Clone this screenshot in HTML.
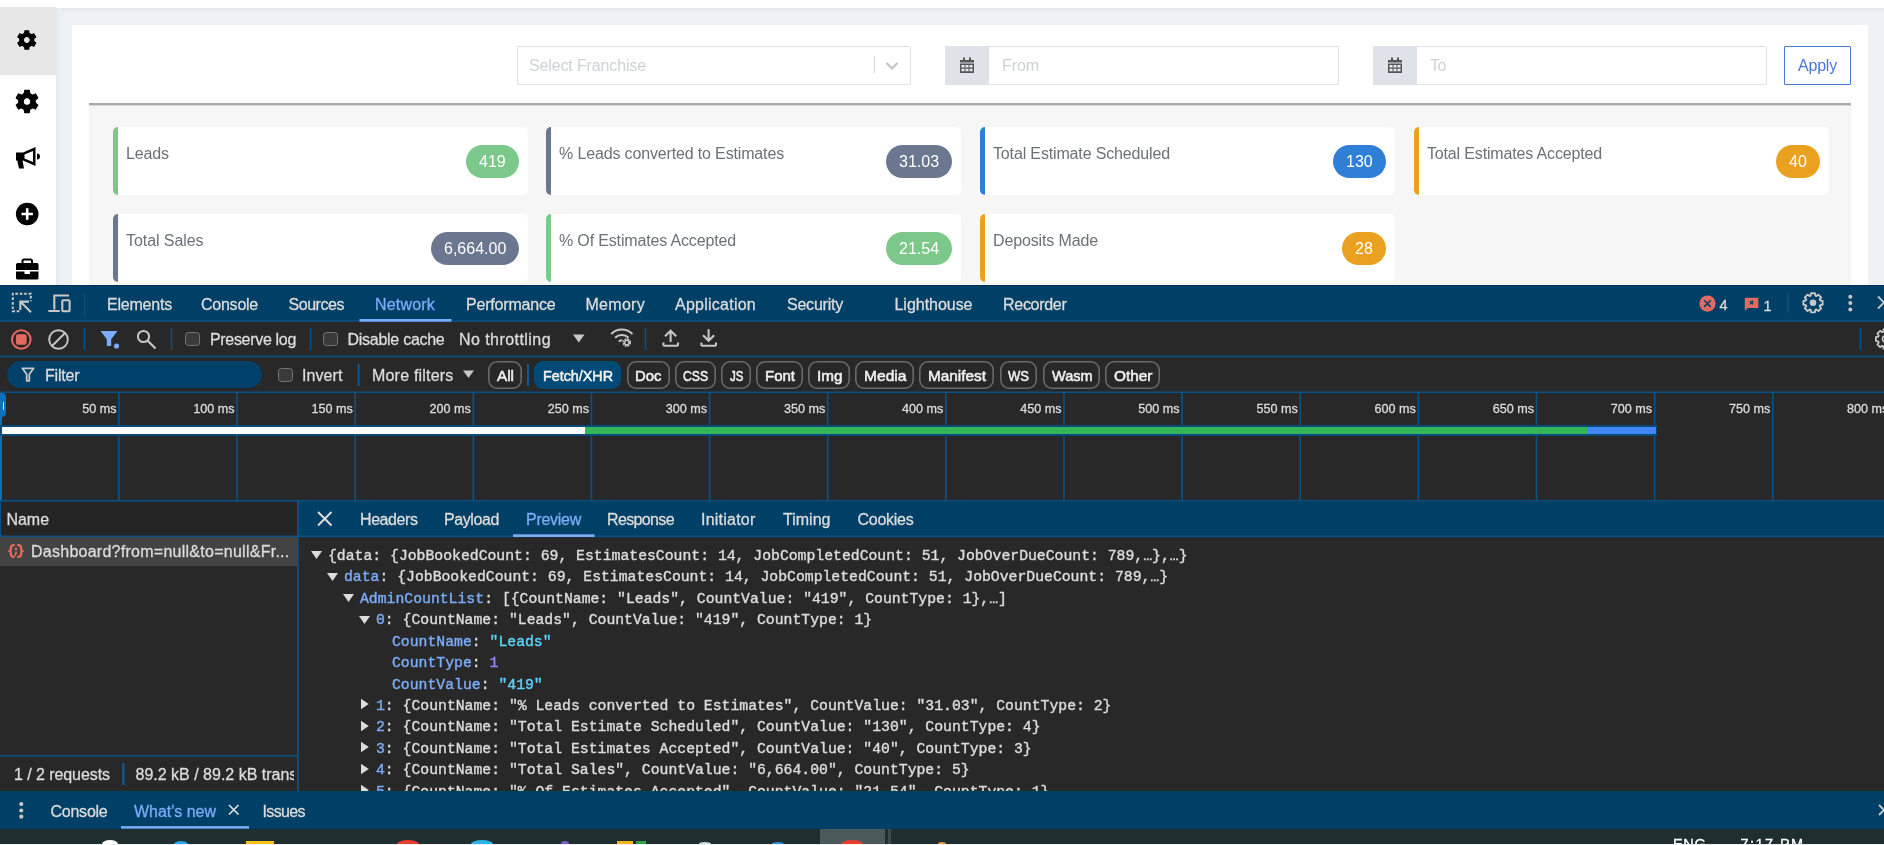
<!DOCTYPE html><html><head><meta charset="utf-8"><title>Dashboard</title><style>
html,body{margin:0;padding:0;background:#fff;}body{width:1884px;height:845px;overflow:hidden;position:relative;font-family:"Liberation Sans", sans-serif;}
.a{position:absolute;box-sizing:border-box;}.t{position:absolute;white-space:pre;line-height:24px;height:24px;}
svg{position:absolute;overflow:visible;}.m{font-family:"Liberation Mono",monospace;}.z{z-index:3;}.d{-webkit-text-stroke:0.3px currentColor;}.m.d{-webkit-text-stroke:0.4px currentColor;}
#w{position:absolute;left:0;top:0;width:1884px;height:845px;overflow:hidden;will-change:transform;}
</style></head><body><div id="w">
<div class="a" style="left:56px;top:8px;width:1828px;height:277px;background:#eef1f5;"></div>
<div class="a" style="left:56px;top:8px;width:1828px;height:5px;background:linear-gradient(#e2e6ea,#eef1f5);"></div>
<div class="a" style="left:56px;top:8px;width:5px;height:277px;background:linear-gradient(90deg,#e4e8ec,#eef1f5);"></div>
<div class="a" style="left:0px;top:7px;width:56px;height:68px;background:#e6e6e6;"></div>
<div class="a" style="left:72px;top:25px;width:1796px;height:260px;background:#ffffff;"></div>
<div class="a" style="left:89px;top:105px;width:1762px;height:180px;background:#f6f6f6;"></div>
<div class="a" style="left:89px;top:103px;width:1762px;height:2px;background:#a9a9a9;"></div>
<div class="a" style="left:89px;top:105px;width:1762px;height:1px;background:#d8d8d8;"></div>
<div class="a" style="left:517px;top:46px;width:394px;height:39px;background:#fff;border:1px solid #dfe3e8;border-radius:1px;"></div>
<div class="a" style="left:874px;top:56px;width:1px;height:17px;background:#d4d4d4;"></div>
<svg style="left:885px;top:61px" width="14" height="10" viewBox="0 0 14 10"><path d="M1.5 2 L7 7.5 L12.5 2" fill="none" stroke="#c2c2c2" stroke-width="2"/></svg>
<div class="a" style="left:945px;top:46px;width:394px;height:39px;background:#fff;border:1px solid #dfe3e8;border-radius:1px;"></div>
<div class="a" style="left:945px;top:46px;width:44px;height:39px;background:#dfe3e9;border-radius:1px 0 0 1px;"></div>
<svg style="left:960px;top:57px" width="14" height="16" viewBox="0 0 14 16"><path d="M0 3 h14 v2.5 h-14z M3 0.5 h2 v3 h-2z M9 0.5 h2 v3 h-2z" fill="#555"/><path d="M0 6.5 h14 v9.5 h-14z" fill="#555"/><path d="M1.5 8 h3 v2.5 h-3z M5.5 8 h3 v2.5 h-3z M9.5 8 h3 v2.5 h-3z M1.5 11.7 h3 v2.5 h-3z M5.5 11.7 h3 v2.5 h-3z M9.5 11.7 h3 v2.5 h-3z" fill="#e6e9ee"/></svg>
<div class="a" style="left:1373px;top:46px;width:394px;height:39px;background:#fff;border:1px solid #dfe3e8;border-radius:1px;"></div>
<div class="a" style="left:1373px;top:46px;width:44px;height:39px;background:#dfe3e9;border-radius:1px 0 0 1px;"></div>
<svg style="left:1388px;top:57px" width="14" height="16" viewBox="0 0 14 16"><path d="M0 3 h14 v2.5 h-14z M3 0.5 h2 v3 h-2z M9 0.5 h2 v3 h-2z" fill="#555"/><path d="M0 6.5 h14 v9.5 h-14z" fill="#555"/><path d="M1.5 8 h3 v2.5 h-3z M5.5 8 h3 v2.5 h-3z M9.5 8 h3 v2.5 h-3z M1.5 11.7 h3 v2.5 h-3z M5.5 11.7 h3 v2.5 h-3z M9.5 11.7 h3 v2.5 h-3z" fill="#e6e9ee"/></svg>
<div class="a" style="left:1784px;top:46px;width:67px;height:39px;background:#fff;border:1px solid #4a78d8;border-radius:1px;"></div>
<div class="a" style="left:113px;top:127px;width:415px;height:68px;background:#fff;border-left:5px solid #7bc88a;border-radius:5px;"></div>
<div class="a" style="left:466px;top:145px;width:53px;height:33px;background:#7bc88a;border-radius:17px;"></div>
<div class="a" style="left:546px;top:127px;width:415px;height:68px;background:#fff;border-left:5px solid #6a778f;border-radius:5px;"></div>
<div class="a" style="left:886px;top:145px;width:66px;height:33px;background:#6a778f;border-radius:17px;"></div>
<div class="a" style="left:980px;top:127px;width:415px;height:68px;background:#fff;border-left:5px solid #2f7fd6;border-radius:5px;"></div>
<div class="a" style="left:1333px;top:145px;width:53px;height:33px;background:#2f7fd6;border-radius:17px;"></div>
<div class="a" style="left:1414px;top:127px;width:415px;height:68px;background:#fff;border-left:5px solid #e9a11f;border-radius:5px;"></div>
<div class="a" style="left:1776px;top:145px;width:44px;height:33px;background:#e9a11f;border-radius:17px;"></div>
<div class="a" style="left:113px;top:214px;width:415px;height:68px;background:#fff;border-left:5px solid #6a778f;border-radius:5px;"></div>
<div class="a" style="left:431px;top:232px;width:88px;height:33px;background:#6a778f;border-radius:17px;"></div>
<div class="a" style="left:546px;top:214px;width:415px;height:68px;background:#fff;border-left:5px solid #7bc88a;border-radius:5px;"></div>
<div class="a" style="left:886px;top:232px;width:66px;height:33px;background:#7bc88a;border-radius:17px;"></div>
<div class="a" style="left:980px;top:214px;width:415px;height:68px;background:#fff;border-left:5px solid #e9a11f;border-radius:5px;"></div>
<div class="a" style="left:1342px;top:232px;width:44px;height:33px;background:#e9a11f;border-radius:17px;"></div>
<svg style="left:0;top:0" width="56" height="285"><path d="M24.57 33.26 L24.93 30.79 L28.67 30.79 L29.03 33.26 L31.52 34.70 L33.84 33.78 L35.71 37.01 L33.75 38.56 L33.75 41.44 L35.71 42.99 L33.84 46.22 L31.52 45.30 L29.03 46.74 L28.67 49.21 L24.93 49.21 L24.57 46.74 L22.08 45.30 L19.76 46.22 L17.89 42.99 L19.85 41.44 L19.85 38.56 L17.89 37.01 L19.76 33.78 L22.08 34.70Z M23.30 40.00 a3.5 3.5 0 1 0 7.0 0 a3.5 3.5 0 1 0 -7.0 0Z" fill="#000" fill-rule="evenodd" stroke="#000" stroke-width="1.2" stroke-linejoin="round"/><path d="M24.39 93.62 L24.77 90.52 L29.23 90.52 L29.61 93.62 L32.52 95.30 L35.39 94.08 L37.62 97.94 L35.13 99.82 L35.13 103.18 L37.62 105.06 L35.39 108.92 L32.52 107.70 L29.61 109.38 L29.23 112.48 L24.77 112.48 L24.39 109.38 L21.48 107.70 L18.61 108.92 L16.38 105.06 L18.87 103.18 L18.87 99.82 L16.38 97.94 L18.61 94.08 L21.48 95.30Z M23.10 101.50 a3.9 3.9 0 1 0 7.8 0 a3.9 3.9 0 1 0 -7.8 0Z" fill="#000" fill-rule="evenodd" stroke="#000" stroke-width="1.4" stroke-linejoin="round"/><path d="M16 152.5 h7 l12.5 -5.5 v19 l-12.5 -5.5 h-0.5 l1.5 8 h-5 l-1.8 -8 h-1.2z M37 153.5 a3 3 0 0 1 0 6z" fill="#000"/><path d="M24.5 154.5 l8.5 -3.5 v11 l-8.5 -3.5z" fill="#fff"/><circle cx="27.2" cy="214" r="11.3" fill="#000"/><path d="M21.5 214 h11.4 M27.2 208.3 v11.4" stroke="#fff" stroke-width="2.6"/><path d="M16 264.5 a1.5 1.5 0 0 1 1.5 -1.5 h19.5 a1.5 1.5 0 0 1 1.5 1.5 v5.5 h-22.5z M16 271.5 h8.5 v2.5 h5.5 v-2.5 h8.5 v6.5 a1.5 1.5 0 0 1 -1.5 1.5 h-19.5 a1.5 1.5 0 0 1 -1.5 -1.5z" fill="#000"/><path d="M22.5 263 v-2 a1.5 1.5 0 0 1 1.5 -1.5 h6.5 a1.5 1.5 0 0 1 1.5 1.5 v2" fill="none" stroke="#000" stroke-width="2"/></svg>
<div class="a" style="left:0px;top:285px;width:1884px;height:36px;background:#003f66;"></div>
<div class="a" style="left:0px;top:285px;width:1884px;height:1px;background:#00305f;"></div>
<div class="a" style="left:0px;top:321px;width:1884px;height:471px;background:#282828;"></div>
<svg style="left:0px;top:320px;" width="1886" height="4"><rect x="0.00" y="0.20" width="1884" height="1.6" fill="#0b5083"/></svg>
<svg style="left:0px;top:355px;" width="1886" height="4"><rect x="0.00" y="0.60" width="1884" height="1.6" fill="#0b5083"/></svg>
<svg style="left:0px;top:391px;" width="1886" height="4"><rect x="0.00" y="0.50" width="1884" height="1.6" fill="#0b5083"/></svg>
<svg style="left:359px;top:319px;" width="94" height="5"><rect x="0.50" y="0.00" width="92" height="2.7" fill="#7cacf8"/></svg>
<div class="a" style="left:84px;top:293px;width:1px;height:24px;background:#0f507f;"></div>
<svg style="left:0;top:285px" width="90" height="36"><path d="M12.800 15 v-6.300 h18 v7.500 M12.800 17 v9.300 h7.500" fill="none" stroke="#c7c7c7" stroke-width="2" stroke-dasharray="2.700 1.700"/><path d="M21 17.300 L31 27.300 M20.300 25 v-8.400 h8.700" fill="none" stroke="#c7c7c7" stroke-width="2.100"/><path d="M54.300 24.500 v-14 h14.700 M48.400 26 h11.300" fill="none" stroke="#c7c7c7" stroke-width="2.100"/><rect x="62.300" y="15.300" width="7.300" height="11" rx="1" fill="none" stroke="#c7c7c7" stroke-width="2.100"/></svg>
<svg style="left:1690px;top:285px" width="194" height="36"><circle cx="17.5" cy="18.6" r="8.1" fill="#e46962"/><path d="M14.2 15.3 l6.600 6.600 M20.800 15.300 l-6.600 6.600" stroke="#003f66" stroke-width="1.500"/><path d="M54.800 12.700 h13.500 v10.300 h-10.500 l-3 2.800z" fill="#e46962"/><path d="M60 16 l3.200 3.200 M63.200 16 l-3.200 3.200" stroke="#003f66" stroke-width="1.300"/><path d="M98 7.500 v20" stroke="#0d5288" stroke-width="1.500"/><g transform="translate(123,17.800)"><path d="M-2.36 -7.12 L-1.95 -9.60 L1.95 -9.60 L2.36 -7.12 L3.37 -6.70 L5.41 -8.17 L8.17 -5.41 L6.70 -3.37 L7.12 -2.36 L9.60 -1.95 L9.60 1.95 L7.12 2.36 L6.70 3.37 L8.17 5.41 L5.41 8.17 L3.37 6.70 L2.36 7.12 L1.95 9.60 L-1.95 9.60 L-2.36 7.12 L-3.37 6.70 L-5.41 8.17 L-8.17 5.41 L-6.70 3.37 L-7.12 2.36 L-9.60 1.95 L-9.60 -1.95 L-7.12 -2.36 L-6.70 -3.37 L-8.17 -5.41 L-5.41 -8.17 L-3.37 -6.70Z M-0.01 0.00 a0.01 0.01 0 1 0 0.02 0 a0.01 0.01 0 1 0 -0.02 0Z" fill="none" stroke="#c7c7c7" stroke-width="1.900" stroke-linejoin="round"/><circle cx="0" cy="0" r="3.300" fill="#c7c7c7"/></g><circle cx="160.300" cy="11.700" r="2" fill="#c7c7c7"/><circle cx="160.300" cy="18" r="2" fill="#c7c7c7"/><circle cx="160.300" cy="24.500" r="2" fill="#c7c7c7"/><path d="M188 11.500 l12 12 M200 11.500 l-12 12" stroke="#c7c7c7" stroke-width="1.900"/></svg>
<svg style="left:0;top:321px" width="1884" height="36"><circle cx="21.3" cy="18.500" r="9.3" fill="none" stroke="#e46962" stroke-width="2"/><rect x="16" y="13.2" width="10.600" height="10.600" rx="2" fill="#e46962"/><circle cx="58.5" cy="18.500" r="9.300" fill="none" stroke="#c7c7c7" stroke-width="1.9"/><path d="M52 25 L65 12" stroke="#c7c7c7" stroke-width="1.9"/><path d="M84.500 7 v22 M171.500 7 v22 M310.500 7 v22 M645.500 7 v22 M1860.500 7 v22" stroke="#0b5083" stroke-width="1.6"/><path d="M100.500 10 h17 l-6.300 8.300 v6.700 h-4.400 v-6.700z" fill="#7cacf8"/><circle cx="116.500" cy="25" r="2.600" fill="#7cacf8"/><circle cx="143.500" cy="15.500" r="5.600" fill="none" stroke="#c7c7c7" stroke-width="2"/><path d="M147.500 19.500 L155.500 27.500" stroke="#c7c7c7" stroke-width="2.2"/><path d="M611.200 12.900 a15 15 0 0 1 21.200 0 M615.100 16.800 a9.500 9.500 0 0 1 13.400 0 M618.800 20.500 a4.200 4.200 0 0 1 3.500 -1.200" fill="none" stroke="#c7c7c7" stroke-width="2.100"/><circle cx="626.800" cy="21.600" r="3.100" fill="none" stroke="#c7c7c7" stroke-width="2.400" stroke-dasharray="1.700 0.740"/><circle cx="626.800" cy="21.600" r="2.200" fill="none" stroke="#c7c7c7" stroke-width="1.300"/><path d="M670.600 21 v-10.500 M665 15.300 l5.600 -5.600 l5.600 5.600 M663.400 21.500 v2.300 a1 1 0 0 0 1 1 h12.600 a1 1 0 0 0 1 -1 v-2.300" fill="none" stroke="#c7c7c7" stroke-width="2.100"/><path d="M708.600 8.300 v11 M703 14.200 l5.600 5.600 l5.600 -5.600 M701.400 21.500 v2.300 a1 1 0 0 0 1 1 h12.600 a1 1 0 0 0 1 -1 v-2.300" fill="none" stroke="#c7c7c7" stroke-width="2.100"/><g transform="translate(1885.5,18)"><path d="M-2.39 -7.21 L-1.95 -9.60 L1.95 -9.60 L2.39 -7.21 L3.41 -6.79 L5.41 -8.17 L8.17 -5.41 L6.79 -3.41 L7.21 -2.39 L9.60 -1.95 L9.60 1.95 L7.21 2.39 L6.79 3.41 L8.17 5.41 L5.41 8.17 L3.41 6.79 L2.39 7.21 L1.95 9.60 L-1.95 9.60 L-2.39 7.21 L-3.41 6.79 L-5.41 8.17 L-8.17 5.41 L-6.79 3.41 L-7.21 2.39 L-9.60 1.95 L-9.60 -1.95 L-7.21 -2.39 L-6.79 -3.41 L-8.17 -5.41 L-5.41 -8.17 L-3.41 -6.79Z M-0.01 0.00 a0.01 0.01 0 1 0 0.02 0 a0.01 0.01 0 1 0 -0.02 0Z" fill="none" stroke="#c7c7c7" stroke-width="1.8" stroke-linejoin="round"/><circle cx="0" cy="0" r="3" fill="none" stroke="#c7c7c7" stroke-width="1.8"/></g></svg>
<div class="a" style="left:185px;top:331.5px;width:15px;height:14.5px;background:#3a3a3a;border:1.5px solid #757575;border-radius:3.5px;"></div>
<div class="a" style="left:322.5px;top:331.5px;width:15px;height:14.5px;background:#3a3a3a;border:1.5px solid #757575;border-radius:3.5px;"></div>
<svg style="left:572.5px;top:334px" width="12" height="9"><path d="M0 0.500 h11.500 l-5.750 8z" fill="#c7c7c7"/></svg>
<div class="a" style="left:7px;top:361px;width:255px;height:27px;background:#00416c;border-radius:14px;"></div>
<svg style="left:21px;top:367px" width="14" height="16"><path d="M1.300 1.300 h11.400 l-4.400 6 v6.500 h-2.600 v-6.500z" fill="none" stroke="#c7c7c7" stroke-width="1.800" stroke-linejoin="round"/></svg>
<div class="a" style="left:278px;top:367.5px;width:15px;height:14.5px;background:#3a3a3a;border:1.5px solid #757575;border-radius:3.5px;"></div>
<svg style="left:357px;top:364px;" width="4" height="24"><rect x="0.60" y="0.00" width="2" height="22" fill="#0d5a96"/></svg>
<svg style="left:462.5px;top:370px" width="12" height="9"><path d="M0 0.500 h11 l-5.500 7.500z" fill="#c7c7c7"/></svg>
<svg style="left:527px;top:364px;" width="4" height="24"><rect x="0.00" y="0.00" width="2" height="22" fill="#0d5a96"/></svg>
<div class="a" style="left:488px;top:361px;width:33.5px;height:28px;box-shadow:inset 0 0 0 1.6px #6a6a6a;border-radius:9px;"></div>
<div class="a" style="left:534px;top:361px;width:86.5px;height:28px;background:#004a77;border-radius:9px;"></div>
<div class="a" style="left:626.5px;top:361px;width:43.0px;height:28px;box-shadow:inset 0 0 0 1.6px #6a6a6a;border-radius:9px;"></div>
<div class="a" style="left:674.5px;top:361px;width:41.5px;height:28px;box-shadow:inset 0 0 0 1.6px #6a6a6a;border-radius:9px;"></div>
<div class="a" style="left:721px;top:361px;width:30px;height:28px;box-shadow:inset 0 0 0 1.6px #6a6a6a;border-radius:9px;"></div>
<div class="a" style="left:756px;top:361px;width:46.5px;height:28px;box-shadow:inset 0 0 0 1.6px #6a6a6a;border-radius:9px;"></div>
<div class="a" style="left:808px;top:361px;width:42px;height:28px;box-shadow:inset 0 0 0 1.6px #6a6a6a;border-radius:9px;"></div>
<div class="a" style="left:855px;top:361px;width:59px;height:28px;box-shadow:inset 0 0 0 1.6px #6a6a6a;border-radius:9px;"></div>
<div class="a" style="left:919px;top:361px;width:74.5px;height:28px;box-shadow:inset 0 0 0 1.6px #6a6a6a;border-radius:9px;"></div>
<div class="a" style="left:999.5px;top:361px;width:37.5px;height:28px;box-shadow:inset 0 0 0 1.6px #6a6a6a;border-radius:9px;"></div>
<div class="a" style="left:1043px;top:361px;width:57px;height:28px;box-shadow:inset 0 0 0 1.6px #6a6a6a;border-radius:9px;"></div>
<div class="a" style="left:1105px;top:361px;width:55px;height:28px;box-shadow:inset 0 0 0 1.6px #6a6a6a;border-radius:9px;"></div>
<svg style="left:118px;top:393px;" width="4" height="109"><rect x="0.08" y="0.00" width="1.7" height="107" fill="#0b5083"/></svg>
<svg style="left:236px;top:393px;" width="4" height="109"><rect x="0.21" y="0.00" width="1.7" height="107" fill="#0b5083"/></svg>
<svg style="left:354px;top:393px;" width="4" height="109"><rect x="0.34" y="0.00" width="1.7" height="107" fill="#0b5083"/></svg>
<svg style="left:472px;top:393px;" width="4" height="109"><rect x="0.47" y="0.00" width="1.7" height="107" fill="#0b5083"/></svg>
<svg style="left:590px;top:393px;" width="4" height="109"><rect x="0.60" y="0.00" width="1.7" height="107" fill="#0b5083"/></svg>
<svg style="left:708px;top:393px;" width="4" height="109"><rect x="0.73" y="0.00" width="1.7" height="107" fill="#0b5083"/></svg>
<svg style="left:826px;top:393px;" width="4" height="109"><rect x="0.86" y="0.00" width="1.7" height="107" fill="#0b5083"/></svg>
<svg style="left:944px;top:393px;" width="4" height="109"><rect x="0.99" y="0.00" width="1.7" height="107" fill="#0b5083"/></svg>
<svg style="left:1063px;top:393px;" width="4" height="109"><rect x="0.12" y="0.00" width="1.7" height="107" fill="#0b5083"/></svg>
<svg style="left:1181px;top:393px;" width="4" height="109"><rect x="0.25" y="0.00" width="1.7" height="107" fill="#0b5083"/></svg>
<svg style="left:1299px;top:393px;" width="4" height="109"><rect x="0.38" y="0.00" width="1.7" height="107" fill="#0b5083"/></svg>
<svg style="left:1417px;top:393px;" width="4" height="109"><rect x="0.51" y="0.00" width="1.7" height="107" fill="#0b5083"/></svg>
<svg style="left:1535px;top:393px;" width="4" height="109"><rect x="0.64" y="0.00" width="1.7" height="107" fill="#0b5083"/></svg>
<svg style="left:1653px;top:393px;" width="4" height="109"><rect x="0.77" y="0.00" width="1.7" height="107" fill="#0b5083"/></svg>
<svg style="left:1771px;top:393px;" width="4" height="109"><rect x="0.90" y="0.00" width="1.7" height="107" fill="#0b5083"/></svg>
<svg style="left:1890px;top:393px;" width="4" height="109"><rect x="0.03" y="0.00" width="1.7" height="107" fill="#0b5083"/></svg>
<div class="a" style="left:0px;top:393px;width:2px;height:107px;background:#0d6fb8;"></div>
<div class="a" style="left:0px;top:393px;width:6px;height:24px;background:#0d6fb8;border-radius:0 4px 4px 0;"></div>
<div class="a" style="left:2.5px;top:402px;width:1px;height:8px;background:#cfe3f5;"></div>
<div class="a" style="left:0px;top:425px;width:1657px;height:11px;background:#0a4a78;"></div>
<div class="a" style="left:2px;top:426.8px;width:583px;height:7.5px;background:#ffffff;"></div>
<div class="a" style="left:585px;top:426.8px;width:1003px;height:7.5px;background:#33b55a;"></div>
<div class="a" style="left:1588px;top:426.8px;width:67.5px;height:7.5px;background:#4285f4;"></div>
<svg style="left:0px;top:499px;" width="1886" height="4"><rect x="0.00" y="0.90" width="1884" height="1.7" fill="#0b5083"/></svg>
<div class="a" style="left:0px;top:502px;width:298px;height:34px;background:#252525;border-left:1px solid #0b5083;"></div>
<div class="a" style="left:298px;top:501px;width:1586px;height:35px;background:#003f66;"></div>
<svg style="left:0px;top:535px;" width="1886" height="4"><rect x="0.00" y="0.50" width="1884" height="1.7" fill="#0b5083"/></svg>
<svg style="left:297px;top:501px;" width="4" height="293"><rect x="0.00" y="0.00" width="1.9" height="291" fill="#0b5083"/></svg>
<div class="a" style="left:0px;top:537px;width:297px;height:29px;background:#434343;"></div>
<svg style="left:7px;top:544px" width="19" height="15"><path d="M6.800 1.100 c-2.600 0 -2.900 1 -2.900 2.600 v1.300 c0 1.300 -0.900 2 -2.500 2 c1.600 0 2.500 0.700 2.500 2 v1.300 c0 1.600 0.300 2.600 2.900 2.600 M11.200 1.100 c2.600 0 2.900 1 2.900 2.600 v1.300 c0 1.300 0.900 2 2.500 2 c-1.600 0 -2.500 0.700 -2.500 2 v1.300 c0 1.600 -0.300 2.600 -2.900 2.600" fill="none" stroke="#e8695b" stroke-width="2.200" stroke-linecap="round"/><circle cx="9" cy="5" r="1.250" fill="#e8695b"/><path d="M9 8 v1.600 l-0.900 1.500" stroke="#e8695b" stroke-width="1.700" fill="none" stroke-linecap="round"/></svg>
<svg style="left:0px;top:755px;" width="299" height="4"><rect x="0.00" y="0.00" width="297" height="1.5" fill="#0b5083"/></svg>
<svg style="left:122px;top:763px;" width="5" height="24"><rect x="0.30" y="0.00" width="2.2" height="22" fill="#0d5a96"/></svg>
<svg style="left:317px;top:511px" width="16" height="16"><path d="M1 1 L14.500 14.500 M14.500 1 L1 14.500" stroke="#dcdcdc" stroke-width="2"/></svg>
<svg style="left:513px;top:534px;" width="84" height="5"><rect x="0.00" y="0.30" width="81.5" height="2.7" fill="#7cacf8"/></svg>
<svg style="left:310.6px;top:551.20px" width="12" height="9"><path d="M0 0 h11 l-5.500 8z" fill="#dcdcdc"/></svg>
<svg style="left:326.6px;top:572.65px" width="12" height="9"><path d="M0 0 h11 l-5.500 8z" fill="#dcdcdc"/></svg>
<svg style="left:342.6px;top:594.10px" width="12" height="9"><path d="M0 0 h11 l-5.500 8z" fill="#dcdcdc"/></svg>
<svg style="left:358.6px;top:615.55px" width="12" height="9"><path d="M0 0 h11 l-5.500 8z" fill="#dcdcdc"/></svg>
<svg style="left:361px;top:699.15px;" width="8" height="11"><path d="M0 -0.200 v10.400 l7.800 -5.200z" fill="#dcdcdc"/></svg>
<svg style="left:361px;top:720.60px;" width="8" height="11"><path d="M0 -0.200 v10.400 l7.800 -5.200z" fill="#dcdcdc"/></svg>
<svg style="left:361px;top:742.05px;" width="8" height="11"><path d="M0 -0.200 v10.400 l7.800 -5.200z" fill="#dcdcdc"/></svg>
<svg style="left:361px;top:763.50px;" width="8" height="11"><path d="M0 -0.200 v10.400 l7.800 -5.200z" fill="#dcdcdc"/></svg>
<svg style="left:361px;top:784.95px;" width="8" height="11"><path d="M0 -0.200 v10.400 l7.800 -5.200z" fill="#dcdcdc"/></svg>
<div class="a" style="left:0px;top:791px;width:1884px;height:37.8px;background:#003f66;z-index:2;"></div>
<svg style="z-index:3;left:15px;top:797.5px" width="12" height="26"><circle cx="6.300" cy="6.100" r="2.100" fill="#c7c7c7"/><circle cx="6.300" cy="12.500" r="2.100" fill="#c7c7c7"/><circle cx="6.300" cy="18.700" r="2.100" fill="#c7c7c7"/></svg>
<svg style="z-index:3;left:228px;top:804px" width="12" height="12"><path d="M1 1 L10.500 10.500 M10.500 1 L1 10.500" stroke="#dcdcdc" stroke-width="1.700"/></svg>
<svg style="left:121px;top:826px;z-index:3;" width="130" height="5"><rect x="0.00" y="0.10" width="128" height="2.5" fill="#7cacf8"/></svg>
<svg style="z-index:3;left:1876px;top:802px" width="16" height="16"><path d="M3 3 L13 13 M13 3 L3 13" stroke="#c7c7c7" stroke-width="1.800"/></svg>
<div class="a" style="left:0px;top:828.7px;width:1884px;height:15.3px;background:#1f2e2f;z-index:3;"></div>
<div class="a" style="left:0px;top:844px;width:1884px;height:1px;background:#f3f3f3;z-index:5;"></div>
<div class="a" style="left:820px;top:828.7px;width:65px;height:15.3px;background:#4a5a5b;z-index:3;"></div>
<div class="a" style="left:888px;top:828.7px;width:2.5px;height:15.3px;background:#3c4a4b;z-index:3;"></div>
<div class="a" style="left:102.0px;top:840px;width:16px;height:8px;background:#ffffff;z-index:4;border-radius:8.0px 8.0px 0 0/4px 4px 0 0;"></div>
<div class="a" style="left:174.0px;top:841px;width:14px;height:7px;background:#2aa7e8;z-index:4;border-radius:7.0px 7.0px 0 0/3px 3px 0 0;"></div>
<div class="a" style="left:246px;top:841px;width:28px;height:3px;background:#f6c21c;z-index:4;"></div>
<div class="a" style="left:397.0px;top:840px;width:22px;height:8px;background:#e53e30;z-index:4;border-radius:11.0px 11.0px 0 0/4px 4px 0 0;"></div>
<div class="a" style="left:471.0px;top:840px;width:22px;height:8px;background:#2db4e6;z-index:4;border-radius:11.0px 11.0px 0 0/4px 4px 0 0;"></div>
<div class="a" style="left:561.0px;top:841px;width:8px;height:7px;background:#7b5cc8;z-index:4;border-radius:4.0px 4.0px 0 0/3px 3px 0 0;"></div>
<div class="a" style="left:617px;top:841px;width:16px;height:3px;background:#f2b518;z-index:4;"></div>
<div class="a" style="left:636px;top:841px;width:10px;height:3px;background:#2fa24a;z-index:4;"></div>
<div class="a" style="left:699.0px;top:842px;width:12px;height:6px;background:#d8d8d8;z-index:4;border-radius:6.0px 6.0px 0 0/2px 2px 0 0;"></div>
<div class="a" style="left:772.0px;top:842px;width:12px;height:6px;background:#2f8fe0;z-index:4;border-radius:6.0px 6.0px 0 0/2px 2px 0 0;"></div>
<div class="a" style="left:841.0px;top:840px;width:22px;height:8px;background:#e53e30;z-index:4;border-radius:11.0px 11.0px 0 0/4px 4px 0 0;"></div>
<div class="a" style="left:938.0px;top:842px;width:8px;height:6px;background:#e89a3c;z-index:4;border-radius:4.0px 4.0px 0 0/2px 2px 0 0;"></div>
<div class="t" id="t0" style="left:529px;top:53.70px;color:#cdd1d5;font-size:16px;letter-spacing:-0.136px;">Select Franchise</div>
<div class="t" id="t1" style="left:1002px;top:53.90px;color:#cdd1d5;font-size:16px;letter-spacing:-0.082px;">From</div>
<div class="t" id="t2" style="left:1430px;top:53.90px;color:#cdd1d5;font-size:16px;letter-spacing:-0.453px;">To</div>
<div class="t" id="t3" style="left:1798px;top:54.20px;color:#4a78d8;font-size:16px;letter-spacing:-0.206px;">Apply</div>
<div class="t" id="t4" style="left:126px;top:141.50px;color:#6c7079;font-size:16px;letter-spacing:-0.119px;">Leads</div>
<div class="t" id="t5" style="left:479px;top:149.50px;color:#fff;font-size:16px;">419</div>
<div class="t" id="t6" style="left:559px;top:141.50px;color:#6c7079;font-size:16px;letter-spacing:-0.148px;">% Leads converted to Estimates</div>
<div class="t" id="t7" style="left:899px;top:149.50px;color:#fff;font-size:16px;">31.03</div>
<div class="t" id="t8" style="left:993px;top:141.50px;color:#6c7079;font-size:16px;letter-spacing:-0.148px;">Total Estimate Scheduled</div>
<div class="t" id="t9" style="left:1346px;top:149.50px;color:#fff;font-size:16px;">130</div>
<div class="t" id="t10" style="left:1427px;top:141.50px;color:#6c7079;font-size:16px;letter-spacing:-0.157px;">Total Estimates Accepted</div>
<div class="t" id="t11" style="left:1789px;top:149.50px;color:#fff;font-size:16px;">40</div>
<div class="t" id="t12" style="left:126px;top:228.50px;color:#6c7079;font-size:16px;letter-spacing:-0.070px;">Total Sales</div>
<div class="t" id="t13" style="left:444px;top:236.50px;color:#fff;font-size:16px;">6,664.00</div>
<div class="t" id="t14" style="left:559px;top:228.50px;color:#6c7079;font-size:16px;letter-spacing:-0.154px;">% Of Estimates Accepted</div>
<div class="t" id="t15" style="left:899px;top:236.50px;color:#fff;font-size:16px;">21.54</div>
<div class="t" id="t16" style="left:993px;top:228.50px;color:#6c7079;font-size:16px;letter-spacing:-0.132px;">Deposits Made</div>
<div class="t" id="t17" style="left:1355px;top:236.50px;color:#fff;font-size:16px;">28</div>
<div class="t d" id="t18" style="left:107px;top:292.80px;color:#dcdcdc;font-size:16px;letter-spacing:-0.213px;">Elements</div>
<div class="t d" id="t19" style="left:201px;top:292.80px;color:#dcdcdc;font-size:16px;letter-spacing:-0.243px;">Console</div>
<div class="t d" id="t20" style="left:288.5px;top:292.80px;color:#dcdcdc;font-size:16px;letter-spacing:-0.458px;">Sources</div>
<div class="t d" id="t21" style="left:375px;top:292.80px;color:#7cacf8;font-size:16px;letter-spacing:0.188px;">Network</div>
<div class="t d" id="t22" style="left:466px;top:292.80px;color:#dcdcdc;font-size:16px;letter-spacing:-0.190px;">Performance</div>
<div class="t d" id="t23" style="left:585.5px;top:292.80px;color:#dcdcdc;font-size:16px;letter-spacing:0.286px;">Memory</div>
<div class="t d" id="t24" style="left:675px;top:292.80px;color:#dcdcdc;font-size:16px;letter-spacing:0.247px;">Application</div>
<div class="t d" id="t25" style="left:787px;top:292.80px;color:#dcdcdc;font-size:16px;letter-spacing:-0.225px;">Security</div>
<div class="t d" id="t26" style="left:894.5px;top:292.80px;color:#dcdcdc;font-size:16px;letter-spacing:-0.030px;">Lighthouse</div>
<div class="t d" id="t27" style="left:1003px;top:292.80px;color:#dcdcdc;font-size:16px;letter-spacing:-0.289px;">Recorder</div>
<div class="t d" id="t28" style="left:1719.5px;top:293.00px;color:#dcdcdc;font-size:14.5px;">4</div>
<div class="t d" id="t29" style="left:1763.5px;top:294.00px;color:#dcdcdc;font-size:14.5px;">1</div>
<div class="t d" id="t30" style="left:210px;top:328.30px;color:#dcdcdc;font-size:16px;letter-spacing:-0.319px;">Preserve log</div>
<div class="t d" id="t31" style="left:347.5px;top:328.30px;color:#dcdcdc;font-size:16px;letter-spacing:-0.269px;">Disable cache</div>
<div class="t d" id="t32" style="left:459px;top:328.30px;color:#dcdcdc;font-size:16px;letter-spacing:0.441px;">No throttling</div>
<div class="t d" id="t33" style="left:45px;top:364.30px;color:#dcdcdc;font-size:16px;letter-spacing:-0.177px;">Filter</div>
<div class="t d" id="t34" style="left:302px;top:364.30px;color:#dcdcdc;font-size:16px;letter-spacing:0.081px;">Invert</div>
<div class="t d" id="t35" style="left:372px;top:364.30px;color:#dcdcdc;font-size:16px;letter-spacing:0.198px;">More filters</div>
<div class="t d" id="t36" style="left:496.5px;top:364.30px;color:#f0f0f0;font-size:15px;transform-origin:0 50%;transform:scaleX(1.0197);-webkit-text-stroke:0.55px currentColor;">All</div>
<div class="t d" id="t37" style="left:542.5px;top:364.30px;color:#f0f0f0;font-size:15px;transform-origin:0 50%;transform:scaleX(0.9542);-webkit-text-stroke:0.55px currentColor;">Fetch/XHR</div>
<div class="t d" id="t38" style="left:635.0px;top:364.30px;color:#f0f0f0;font-size:15px;transform-origin:0 50%;transform:scaleX(0.9930);-webkit-text-stroke:0.55px currentColor;">Doc</div>
<div class="t d" id="t39" style="left:683.0px;top:364.30px;color:#f0f0f0;font-size:15px;transform-origin:0 50%;transform:scaleX(0.8105);-webkit-text-stroke:0.55px currentColor;">CSS</div>
<div class="t d" id="t40" style="left:729.5px;top:364.30px;color:#f0f0f0;font-size:15px;transform-origin:0 50%;transform:scaleX(0.7707);-webkit-text-stroke:0.55px currentColor;">JS</div>
<div class="t d" id="t41" style="left:764.5px;top:364.30px;color:#f0f0f0;font-size:15px;transform-origin:0 50%;transform:scaleX(0.9995);-webkit-text-stroke:0.55px currentColor;">Font</div>
<div class="t d" id="t42" style="left:816.5px;top:364.30px;color:#f0f0f0;font-size:15px;transform-origin:0 50%;transform:scaleX(1.0194);-webkit-text-stroke:0.55px currentColor;">Img</div>
<div class="t d" id="t43" style="left:863.5px;top:364.30px;color:#f0f0f0;font-size:15px;transform-origin:0 50%;transform:scaleX(1.0402);-webkit-text-stroke:0.55px currentColor;">Media</div>
<div class="t d" id="t44" style="left:927.5px;top:364.30px;color:#f0f0f0;font-size:15px;transform-origin:0 50%;transform:scaleX(1.0229);-webkit-text-stroke:0.55px currentColor;">Manifest</div>
<div class="t d" id="t45" style="left:1008.0px;top:364.30px;color:#f0f0f0;font-size:15px;transform-origin:0 50%;transform:scaleX(0.8688);-webkit-text-stroke:0.55px currentColor;">WS</div>
<div class="t d" id="t46" style="left:1051.5px;top:364.30px;color:#f0f0f0;font-size:15px;transform-origin:0 50%;transform:scaleX(0.9654);-webkit-text-stroke:0.55px currentColor;">Wasm</div>
<div class="t d" id="t47" style="left:1113.5px;top:364.30px;color:#f0f0f0;font-size:15px;transform-origin:0 50%;transform:scaleX(1.0262);-webkit-text-stroke:0.55px currentColor;">Other</div>
<div class="t d" id="t48" style="right:1767.57px;top:396.80px;color:#dcdcdc;font-size:12.6px;">50 ms</div>
<div class="t d" id="t49" style="right:1649.44px;top:396.80px;color:#dcdcdc;font-size:12.6px;">100 ms</div>
<div class="t d" id="t50" style="right:1531.31px;top:396.80px;color:#dcdcdc;font-size:12.6px;">150 ms</div>
<div class="t d" id="t51" style="right:1413.18px;top:396.80px;color:#dcdcdc;font-size:12.6px;">200 ms</div>
<div class="t d" id="t52" style="right:1295.05px;top:396.80px;color:#dcdcdc;font-size:12.6px;">250 ms</div>
<div class="t d" id="t53" style="right:1176.92px;top:396.80px;color:#dcdcdc;font-size:12.6px;">300 ms</div>
<div class="t d" id="t54" style="right:1058.79px;top:396.80px;color:#dcdcdc;font-size:12.6px;">350 ms</div>
<div class="t d" id="t55" style="right:940.66px;top:396.80px;color:#dcdcdc;font-size:12.6px;">400 ms</div>
<div class="t d" id="t56" style="right:822.53px;top:396.80px;color:#dcdcdc;font-size:12.6px;">450 ms</div>
<div class="t d" id="t57" style="right:704.40px;top:396.80px;color:#dcdcdc;font-size:12.6px;">500 ms</div>
<div class="t d" id="t58" style="right:586.27px;top:396.80px;color:#dcdcdc;font-size:12.6px;">550 ms</div>
<div class="t d" id="t59" style="right:468.14px;top:396.80px;color:#dcdcdc;font-size:12.6px;">600 ms</div>
<div class="t d" id="t60" style="right:350.01px;top:396.80px;color:#dcdcdc;font-size:12.6px;">650 ms</div>
<div class="t d" id="t61" style="right:231.88px;top:396.80px;color:#dcdcdc;font-size:12.6px;">700 ms</div>
<div class="t d" id="t62" style="right:113.75px;top:396.80px;color:#dcdcdc;font-size:12.6px;">750 ms</div>
<div class="t d" id="t63" style="right:-4.38px;top:396.80px;color:#dcdcdc;font-size:12.6px;">800 ms</div>
<div class="t d" id="t64" style="left:6.5px;top:508.30px;color:#dcdcdc;font-size:16px;letter-spacing:-0.047px;">Name</div>
<div class="t d" id="t65" style="left:31px;top:540.30px;color:#dcdcdc;font-size:16px;letter-spacing:0.260px;">Dashboard?from=null&amp;to=null&amp;Fr...</div>
<div class="t d" id="t66" style="left:14px;top:762.80px;color:#dcdcdc;font-size:16px;letter-spacing:-0.068px;">1 / 2 requests</div>
<div class="t d" id="t67" style="left:135.5px;top:762.80px;color:#dcdcdc;font-size:16px;width:158px;overflow:hidden;">89.2 kB / 89.2 kB transferred</div>
<div class="t d" id="t68" style="left:360px;top:508.30px;color:#dcdcdc;font-size:16px;letter-spacing:-0.426px;">Headers</div>
<div class="t d" id="t69" style="left:444px;top:508.30px;color:#dcdcdc;font-size:16px;letter-spacing:-0.404px;">Payload</div>
<div class="t d" id="t70" style="left:526px;top:508.30px;color:#7cacf8;font-size:16px;letter-spacing:-0.272px;">Preview</div>
<div class="t d" id="t71" style="left:607px;top:508.30px;color:#dcdcdc;font-size:16px;letter-spacing:-0.631px;">Response</div>
<div class="t d" id="t72" style="left:701px;top:508.30px;color:#dcdcdc;font-size:16px;letter-spacing:0.226px;">Initiator</div>
<div class="t d" id="t73" style="left:783px;top:508.30px;color:#dcdcdc;font-size:16px;letter-spacing:0.013px;">Timing</div>
<div class="t d" id="t74" style="left:857.5px;top:508.30px;color:#dcdcdc;font-size:16px;letter-spacing:-0.259px;">Cookies</div>
<div class="t m d" id="t75" style="left:328px;top:543.80px;color:#dcdcdc;font-size:14.78px;">{data: {JobBookedCount: 69, EstimatesCount: 14, JobCompletedCount: 51, JobOverDueCount: 789,…},…}</div>
<div class="t m d" id="t76" style="left:344px;top:565.25px;color:#7cacf8;font-size:14.78px;">data</div>
<div class="t m d" id="t77" style="left:379.476px;top:565.25px;color:#dcdcdc;font-size:14.78px;">: {JobBookedCount: 69, EstimatesCount: 14, JobCompletedCount: 51, JobOverDueCount: 789,…}</div>
<div class="t m d" id="t78" style="left:360px;top:586.70px;color:#7cacf8;font-size:14.78px;">AdminCountList</div>
<div class="t m d" id="t79" style="left:484.166px;top:586.70px;color:#dcdcdc;font-size:14.78px;">: [{CountName: &quot;Leads&quot;, CountValue: &quot;419&quot;, CountType: 1},…]</div>
<div class="t m d" id="t80" style="left:376px;top:608.15px;color:#7cacf8;font-size:14.78px;">0</div>
<div class="t m d" id="t81" style="left:384.869px;top:608.15px;color:#dcdcdc;font-size:14.78px;">: {CountName: &quot;Leads&quot;, CountValue: &quot;419&quot;, CountType: 1}</div>
<div class="t m d" id="t82" style="left:392px;top:629.60px;color:#7cacf8;font-size:14.78px;">CountName</div>
<div class="t m d" id="t83" style="left:471.821px;top:629.60px;color:#dcdcdc;font-size:14.78px;">: </div>
<div class="t m d" id="t84" style="left:489.559px;top:629.60px;color:#5cd5fb;font-size:14.78px;">&quot;Leads&quot;</div>
<div class="t m d" id="t85" style="left:392px;top:651.05px;color:#7cacf8;font-size:14.78px;">CountType</div>
<div class="t m d" id="t86" style="left:471.821px;top:651.05px;color:#dcdcdc;font-size:14.78px;">: </div>
<div class="t m d" id="t87" style="left:489.559px;top:651.05px;color:#9980ff;font-size:14.78px;">1</div>
<div class="t m d" id="t88" style="left:392px;top:672.50px;color:#7cacf8;font-size:14.78px;">CountValue</div>
<div class="t m d" id="t89" style="left:480.69px;top:672.50px;color:#dcdcdc;font-size:14.78px;">: </div>
<div class="t m d" id="t90" style="left:498.428px;top:672.50px;color:#5cd5fb;font-size:14.78px;">&quot;419&quot;</div>
<div class="t m d" id="t91" style="left:376px;top:693.95px;color:#7cacf8;font-size:14.78px;">1</div>
<div class="t m d" id="t92" style="left:384.869px;top:693.95px;color:#dcdcdc;font-size:14.78px;">: {CountName: &quot;% Leads converted to Estimates&quot;, CountValue: &quot;31.03&quot;, CountType: 2}</div>
<div class="t m d" id="t93" style="left:376px;top:715.40px;color:#7cacf8;font-size:14.78px;">2</div>
<div class="t m d" id="t94" style="left:384.869px;top:715.40px;color:#dcdcdc;font-size:14.78px;">: {CountName: &quot;Total Estimate Scheduled&quot;, CountValue: &quot;130&quot;, CountType: 4}</div>
<div class="t m d" id="t95" style="left:376px;top:736.85px;color:#7cacf8;font-size:14.78px;">3</div>
<div class="t m d" id="t96" style="left:384.869px;top:736.85px;color:#dcdcdc;font-size:14.78px;">: {CountName: &quot;Total Estimates Accepted&quot;, CountValue: &quot;40&quot;, CountType: 3}</div>
<div class="t m d" id="t97" style="left:376px;top:758.30px;color:#7cacf8;font-size:14.78px;">4</div>
<div class="t m d" id="t98" style="left:384.869px;top:758.30px;color:#dcdcdc;font-size:14.78px;">: {CountName: &quot;Total Sales&quot;, CountValue: &quot;6,664.00&quot;, CountType: 5}</div>
<div class="t m d" id="t99" style="left:376px;top:779.75px;color:#7cacf8;font-size:14.78px;">5</div>
<div class="t m d" id="t100" style="left:384.869px;top:779.75px;color:#dcdcdc;font-size:14.78px;">: {CountName: &quot;% Of Estimates Accepted&quot;, CountValue: &quot;21.54&quot;, CountType: 1}</div>
<div class="t d z" id="t101" style="left:50.5px;top:800.00px;color:#dcdcdc;font-size:16px;letter-spacing:-0.243px;">Console</div>
<div class="t d z" id="t102" style="left:134px;top:800.00px;color:#7cacf8;font-size:16px;letter-spacing:-0.020px;">What&#x27;s new</div>
<div class="t d z" id="t103" style="left:262.5px;top:800.00px;color:#dcdcdc;font-size:16px;letter-spacing:-0.625px;">Issues</div>
<div class="t d z" id="t104" style="left:1673px;top:832.10px;color:#fff;font-size:14.5px;letter-spacing:0.693px;z-index:4;">ENG</div>
<div class="t d z" id="t105" style="left:1740.5px;top:832.10px;color:#fff;font-size:14.5px;letter-spacing:1.429px;z-index:4;">7:17 PM</div>
</div></body></html>
